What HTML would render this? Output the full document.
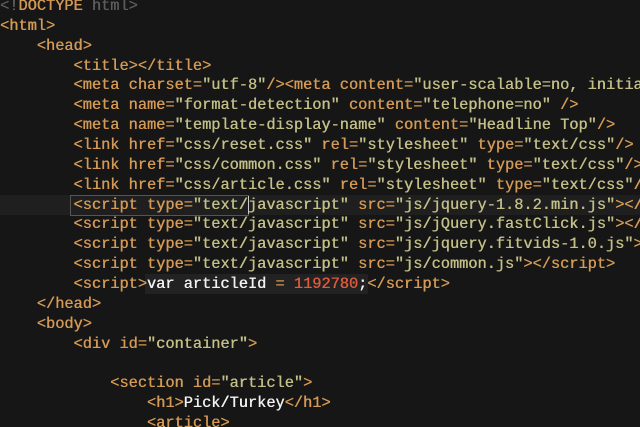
<!DOCTYPE html>
<html><head><style>
html,body{margin:0;padding:0;background:#161616;width:640px;height:427px;overflow:hidden}
.wrap{position:absolute;left:0;top:0;width:640px;height:427px;overflow:hidden}
pre{position:absolute;left:0;top:-3px;margin:0;font-family:"Liberation Mono",monospace;font-size:15.3px;line-height:19.86px;color:#d49a55;white-space:pre;text-shadow:0.4px 0 0 currentColor}
.s{color:#c3bf86}.g{color:#5c5c5c}.w{color:#f2f2f2}.n{color:#e05a3c}
.hl{position:absolute;left:0;top:195px;width:640px;height:20px;background:#1f1f1f}
.box{position:absolute;left:70px;top:195px;width:177px;height:19px;border:1px solid #555}
.cur{position:absolute;left:248px;top:196px;width:1px;height:18px;background:#ccc}
.vb{position:absolute;left:145px;top:274px;width:223px;height:20px;background:#222}
</style></head><body><div class="wrap">
<div class="hl"></div><div class="vb"></div><div class="box"></div><div class="cur"></div>
<pre><span class="g">&lt;!</span>DOCTYPE <span class="g">html&gt;</span>
&lt;html&gt;
    &lt;head&gt;
        &lt;title&gt;&lt;/title&gt;
        &lt;meta charset=<span class="s">"utf-8"</span>/&gt;&lt;meta content=<span class="s">"user-scalable=no, initial</span>
        &lt;meta name=<span class="s">"format-detection"</span> content=<span class="s">"telephone=no"</span> /&gt;
        &lt;meta name=<span class="s">"template-display-name"</span> content=<span class="s">"Headline Top"</span>/&gt;
        &lt;link href=<span class="s">"css/reset.css"</span> rel=<span class="s">"stylesheet"</span> type=<span class="s">"text/css"</span>/&gt;
        &lt;link href=<span class="s">"css/common.css"</span> rel=<span class="s">"stylesheet"</span> type=<span class="s">"text/css"</span>/&gt;
        &lt;link href=<span class="s">"css/article.css"</span> rel=<span class="s">"stylesheet"</span> type=<span class="s">"text/css"</span>/&gt;
        &lt;script type=<span class="s">"text/javascript"</span> src=<span class="s">"js/jquery-1.8.2.min.js"</span>&gt;&lt;/
        &lt;script type=<span class="s">"text/javascript"</span> src=<span class="s">"js/jQuery.fastClick.js"</span>&gt;&lt;/
        &lt;script type=<span class="s">"text/javascript"</span> src=<span class="s">"js/jquery.fitvids-1.0.js"</span>&gt;
        &lt;script type=<span class="s">"text/javascript"</span> src=<span class="s">"js/common.js"</span>&gt;&lt;/script&gt;
        &lt;script&gt;<span class="w">var articleId</span> = <span class="n">1192780</span><span class="w">;</span>&lt;/script&gt;
    &lt;/head&gt;
    &lt;body&gt;
        &lt;div id=<span class="s">"container"</span>&gt;

            &lt;section id=<span class="s">"article"</span>&gt;
                &lt;h1&gt;<span class="w">Pick/Turkey</span>&lt;/h1&gt;
                &lt;article&gt;
</pre>
</div></body></html>
